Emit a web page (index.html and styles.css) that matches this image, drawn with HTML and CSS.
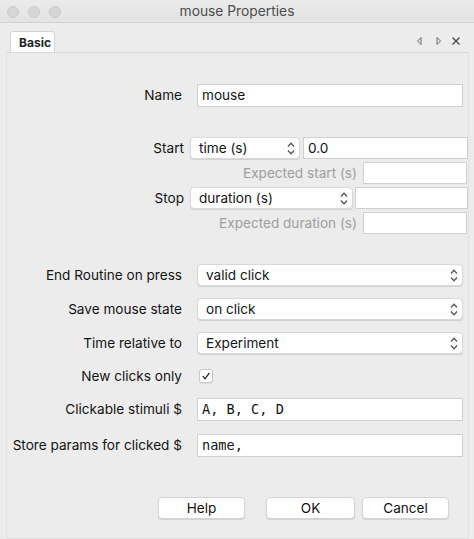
FILE: index.html
```html
<!DOCTYPE html>
<html lang="en">
<head>
  <meta charset="UTF-8">
  <title>mouse Properties</title>
  <link rel="stylesheet" href="styles.css">
</head>
<body>
  <div class="window">
    <!-- Title bar with the (inactive) traffic lights -->
    <div class="titlebar">
      <div class="lights">
        <span class="light"></span>
        <span class="light"></span>
        <span class="light"></span>
      </div>
      <div class="title">mouse Properties</div>
    </div>

    <!-- Tab strip -->
    <div class="tabbar">
      <div class="tab">Basic</div>
      <div class="tab-nav">
        <svg class="nav-arrow" width="8" height="10" viewBox="0 0 8 10"><path d="M6 1.5 L2.5 5 L6 8.5 Z" fill="none" stroke="#6b6b6b" stroke-width="1"/></svg>
        <svg class="nav-arrow" width="8" height="10" viewBox="0 0 8 10"><path d="M2 1.5 L5.5 5 L2 8.5 Z" fill="none" stroke="#6b6b6b" stroke-width="1"/></svg>
        <svg class="nav-close" width="10" height="10" viewBox="0 0 10 10"><path d="M1.5 1.5 L8.5 8.5 M8.5 1.5 L1.5 8.5" stroke="#4a4a4a" stroke-width="1.4"/></svg>
      </div>
    </div>

    <!-- Tab page -->
    <div class="pane">
      <div class="row name-row">
        <label class="lbl">Name</label>
        <div class="text">mouse</div>
      </div>

      <div class="timing">
        <div class="trow">
          <label class="lbl">Start</label>
          <div class="select sel-start">time (s)
            <svg class="updown" width="8" height="13" viewBox="0 0 8 13"><path d="M1 4.5 L4 1.3 L7 4.5 M1 8.5 L4 11.7 L7 8.5" fill="none" stroke="#555" stroke-width="1.3"/></svg>
          </div>
          <div class="text in-start">0.0</div>
        </div>
        <div class="xrow">
          <span class="hint">Expected start (s)</span>
          <div class="text in-expected"></div>
        </div>
        <div class="trow">
          <label class="lbl">Stop</label>
          <div class="select sel-stop">duration (s)
            <svg class="updown" width="8" height="13" viewBox="0 0 8 13"><path d="M1 4.5 L4 1.3 L7 4.5 M1 8.5 L4 11.7 L7 8.5" fill="none" stroke="#555" stroke-width="1.3"/></svg>
          </div>
          <div class="text in-stop"></div>
        </div>
        <div class="xrow">
          <span class="hint">Expected duration (s)</span>
          <div class="text in-expected"></div>
        </div>
      </div>

      <div class="options">
        <label class="lbl">End Routine on press</label>
        <div class="select">valid click
          <svg class="updown" width="8" height="13" viewBox="0 0 8 13"><path d="M1 4.5 L4 1.3 L7 4.5 M1 8.5 L4 11.7 L7 8.5" fill="none" stroke="#555" stroke-width="1.3"/></svg>
        </div>

        <label class="lbl">Save mouse state</label>
        <div class="select">on click
          <svg class="updown" width="8" height="13" viewBox="0 0 8 13"><path d="M1 4.5 L4 1.3 L7 4.5 M1 8.5 L4 11.7 L7 8.5" fill="none" stroke="#555" stroke-width="1.3"/></svg>
        </div>

        <label class="lbl">Time relative to</label>
        <div class="select">Experiment
          <svg class="updown" width="8" height="13" viewBox="0 0 8 13"><path d="M1 4.5 L4 1.3 L7 4.5 M1 8.5 L4 11.7 L7 8.5" fill="none" stroke="#555" stroke-width="1.3"/></svg>
        </div>

        <label class="lbl lbl-check">New clicks only</label>
        <div class="check-cell">
          <span class="checkbox">
            <svg width="10" height="10" viewBox="0 0 10 10"><path d="M1.8 5.2 L4 7.8 L8.4 1.8" fill="none" stroke="#222" stroke-width="1.3"/></svg>
          </span>
        </div>

        <label class="lbl">Clickable stimuli $</label>
        <div class="text mono">A, B, C, D</div>

        <label class="lbl last">Store params for clicked $</label>
        <div class="text mono last">name,</div>
      </div>

      <div class="buttons">
        <button class="btn btn-help">Help</button>
        <button class="btn btn-ok">OK</button>
        <button class="btn btn-cancel">Cancel</button>
      </div>
    </div>
  </div>
</body>
</html>
```

FILE: styles.css
```css
/* Reset */
*, *::before, *::after {
  margin: 0;
  padding: 0;
  box-sizing: border-box;
}
body {
  font-family: 'Inter', 'Liberation Sans', sans-serif;
  font-size: 13.6px;
  color: #141414;
  background: #ececec;
  width: 474px;
  height: 539px;
  overflow: hidden;
}
.window {
  width: 474px;
  height: 539px;
  background: #ececec;
}

/* Title bar */
.titlebar {
  position: relative;
  height: 23px;
  background: linear-gradient(#ebebeb, #e3e3e3);
  border-bottom: 1px solid #d3d3d3;
}
.lights {
  display: flex;
  gap: 9px;
  padding: 6px 0 0 7px;
}
.light {
  width: 12px;
  height: 12px;
  border-radius: 50%;
  background: #d6d6d6;
  border: 1px solid #cbcbcb;
}
.title {
  position: absolute;
  top: 3px;
  left: 0;
  right: 0;
  text-align: center;
  color: #4c4c4c;
  font-size: 13.8px;
}

/* Tab strip */
.tabbar {
  display: flex;
  justify-content: space-between;
  align-items: flex-end;
  height: 30px;
  margin: 0 6px;
  border-bottom: 1px solid #d8d8d8;
}
.tab {
  margin-left: 4px;
  width: 45px;
  height: 21px;
  background: #fff;
  border: 1px solid #d4d4d4;
  border-bottom: none;
  border-radius: 3px 3px 0 0;
  font-size: 12px;
  font-weight: 700;
  padding: 3px 0 0 8px;
  color: #222;
}
.tab-nav {
  display: flex;
  align-items: center;
  gap: 12px;
  height: 20px;
  margin-bottom: 1px;
  padding-right: 7px;
}
.nav-close {
  margin-left: -4px;
}

/* Tab page */
.pane {
  margin: 0 5px 0 6px;
  height: 486px;
  border: 1px solid #e2e2e2;
  border-top: none;
  padding-top: 31px;
}
.lbl {
  text-align: right;
  line-height: 22px;
  white-space: nowrap;
}

/* Form controls */
.text {
  height: 22px;
  line-height: 20px;
  background: #fff;
  border: 1px solid #d0d0d0;
  padding: 0 4px;
  white-space: pre;
}
.mono {
  font-family: 'DejaVu Sans Mono', 'Liberation Mono', monospace;
  font-size: 13.6px;
  height: 23px;
  line-height: 21px;
}
.select {
  position: relative;
  height: 22px;
  line-height: 21px;
  background: #fff;
  border-radius: 4px;
  border: 1px solid #d9d9d9;
  box-shadow: 0 1px 1px rgba(0, 0, 0, 0.12);
  padding-left: 8px;
}
.updown {
  position: absolute;
  right: 4px;
  top: 4px;
}

.row {
  display: grid;
  grid-template-columns: 175px 266px;
  column-gap: 15px;
}
.name-row .lbl {
  line-height: 23px;
}
.name-row .text {
  height: 23px;
  line-height: 21px;
}

/* Start / stop block */
.timing {
  margin-top: 30px;
  display: flex;
  flex-direction: column;
  gap: 3px;
}
.trow {
  display: flex;
  align-items: center;
}
.trow .lbl {
  width: 177px;
  margin-right: 6px;
}
.sel-start {
  width: 110px;
  margin-right: 3px;
}
.sel-stop {
  width: 163px;
  margin-right: 2px;
}
.in-start {
  width: 165px;
}
.in-stop {
  width: 113px;
}
.xrow {
  display: flex;
  justify-content: flex-end;
  align-items: center;
  gap: 6px;
  padding-right: 1px;
}
.hint {
  color: #9e9e9e;
}
.in-expected {
  width: 104px;
}

/* Option grid */
.options {
  margin-top: 30px;
  display: grid;
  grid-template-columns: 175px 266px;
  grid-template-rows: 22px 22px 22px 20px 23px 23px;
  column-gap: 15px;
  row-gap: 12px;
}
.lbl-check {
  line-height: 20px;
}
.options .mono + .lbl,
.options .mono.last {
  margin-top: 1px;
}
.options .lbl:nth-last-of-type(-n+2) {
  line-height: 23px;
}
.check-cell {
  display: flex;
  align-items: center;
  padding-left: 2px;
}
.checkbox {
  display: flex;
  align-items: center;
  justify-content: center;
  width: 14px;
  height: 14px;
  background: #fff;
  border: 1px solid #c9c9c9;
  border-radius: 3px;
  box-shadow: 0 1px 1px rgba(0, 0, 0, 0.08);
}

/* Dialog buttons */
.buttons {
  display: flex;
  justify-content: flex-end;
  margin-top: 41px;
  padding-right: 19px;
}
.btn {
  height: 22px;
  background: #fff;
  border: 1px solid #d4d4d4;
  border-radius: 4px;
  box-shadow: 0 1px 1px rgba(0, 0, 0, 0.12);
  font-family: 'Inter', 'Liberation Sans', sans-serif;
  font-size: 13.6px;
  color: #141414;
}
.btn-help {
  width: 87px;
}
.btn-ok {
  width: 89px;
  margin-left: 21px;
}
.btn-cancel {
  width: 87px;
  margin-left: 7px;
}
```
